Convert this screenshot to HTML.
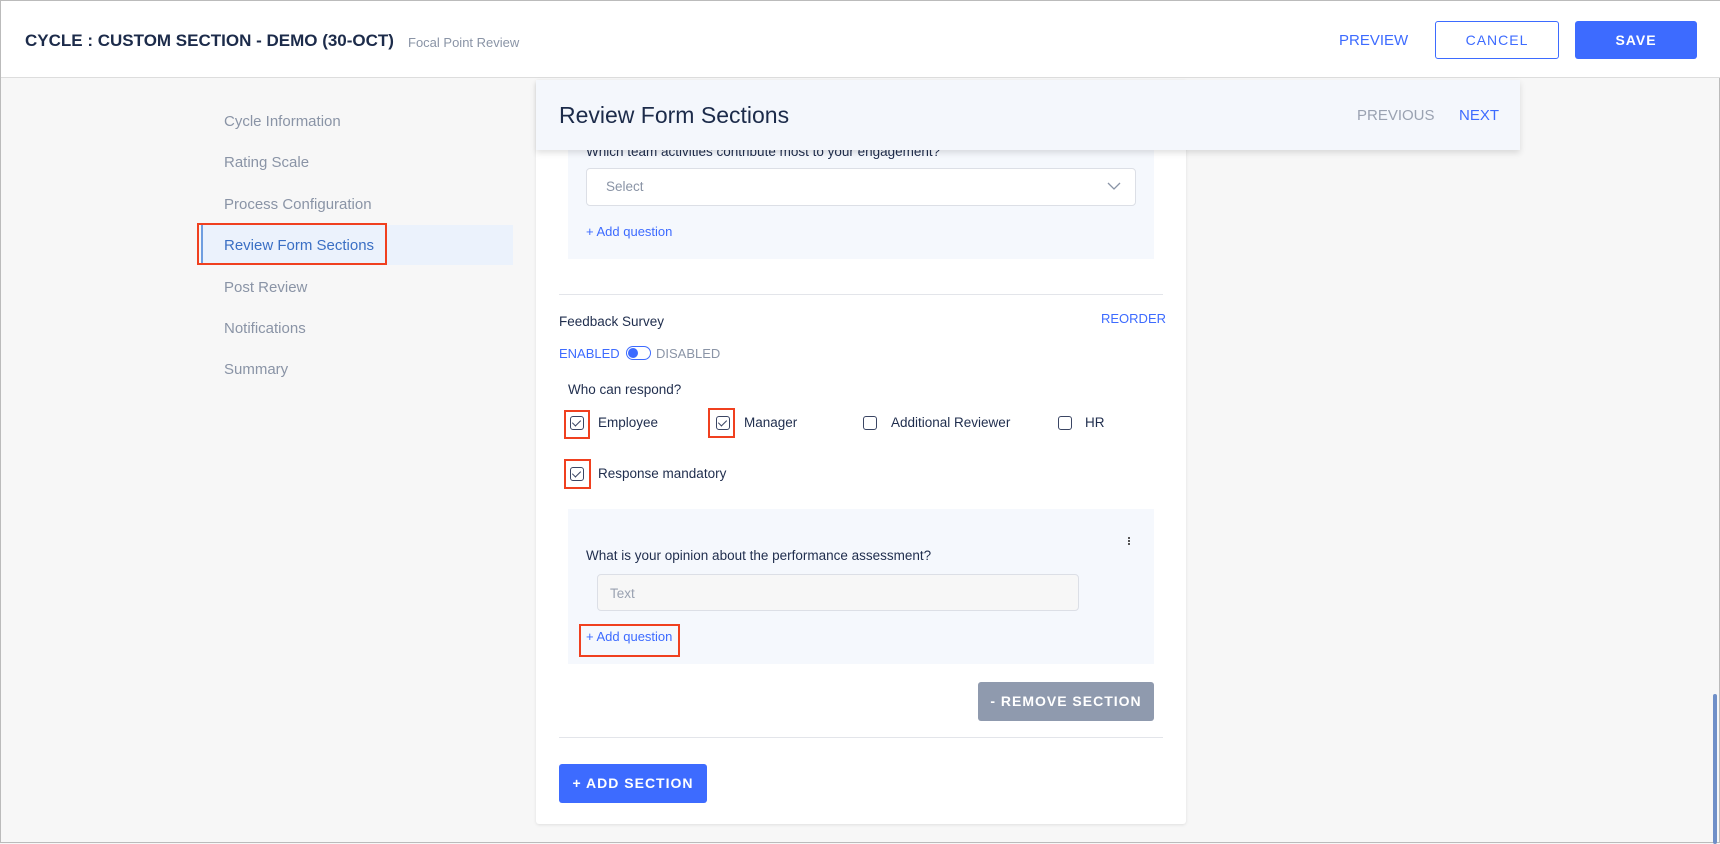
<!DOCTYPE html>
<html><head><style>
*{box-sizing:border-box;margin:0;padding:0}
body{width:1720px;height:843px;overflow:hidden;background:#f7f7f7;font-family:"Liberation Sans",sans-serif;color:#1f2d4d;position:relative;border:1px solid #bbb}
.a{position:absolute;white-space:nowrap}
.red{position:absolute;border:2px solid #f0401f}
.cb{position:absolute;width:14px;height:14px;border:1.5px solid #3a4563;border-radius:3px;background:#fff}
.cb.c::after{content:"";position:absolute;left:3px;top:1px;width:4px;height:7px;border:solid #3a4563;border-width:0 1.3px 1.3px 0;transform:rotate(45deg)}
.f14{font-size:13.5px}
</style></head><body>
<div class="a" style="left:0;top:0;width:1720px;height:77px;background:#fff;border-bottom:1px solid #ddd"></div>
<div class="a" style="left:24px;top:30px;font-size:17px;font-weight:bold;color:#1c2b4a">CYCLE : CUSTOM SECTION - DEMO (30-OCT)</div>
<div class="a" style="left:407px;top:34px;font-size:13px;color:#8a94a6">Focal Point Review</div>
<div class="a" style="left:1338px;top:31px;font-size:15px;color:#3d6bff">PREVIEW</div>
<div class="a" style="left:1434px;top:20px;width:124px;height:38px;border:1px solid #3d6bff;border-radius:3px;color:#3d6bff;font-size:14px;letter-spacing:1px;text-align:center;line-height:36px">CANCEL</div>
<div class="a" style="left:1574px;top:20px;width:122px;height:38px;background:#3d6bff;border-radius:3px;color:#fff;font-size:14px;font-weight:bold;letter-spacing:1px;text-align:center;line-height:38px">SAVE</div>

<div class="a" style="left:200px;top:224px;width:312px;height:40px;background:#ebf2fc;border-left:2px solid #6f9ee0"></div>
<div class="a" style="left:223px;top:100px;font-size:15px;color:#8a94a6;line-height:41.4px">Cycle Information<br>Rating Scale<br>Process Configuration<br><span style="color:#3a6fc4">Review Form Sections</span><br>Post Review<br>Notifications<br>Summary</div>
<div class="red" style="left:196px;top:222px;width:190px;height:42px"></div>

<div class="a" style="left:535px;top:79px;width:650px;height:744px;background:#fff;border-radius:3px;box-shadow:0 1px 3px rgba(0,0,0,.1)"></div>
<div class="a" style="left:567px;top:149px;width:586px;height:109px;background:#f5f8fd"></div>
<div class="a f14" style="left:585px;top:143px;color:#1f2d4d;clip-path:inset(6px 0 0 0)">Which team activities contribute most to your engagement?</div>
<div class="a" style="left:585px;top:167px;width:550px;height:38px;background:#fff;border:1px solid #dcdfe6;border-radius:4px"></div>
<div class="a f14" style="left:605px;top:178px;color:#8a94a6">Select</div>
<svg class="a" style="left:1106px;top:181px" width="14" height="9"><path d="M1 1l6 6 6-6" fill="none" stroke="#8a94a6" stroke-width="1.3"/></svg>
<div class="a" style="left:585px;top:223px;font-size:13px;color:#3d6bff">+ Add question</div>
<div class="a" style="left:535px;top:79px;width:984px;height:70px;background:#f4f7fc;box-shadow:0 3px 6px rgba(0,0,0,.12)"></div>
<div class="a" style="left:558px;top:101px;font-size:23px;color:#1c2b4a">Review Form Sections</div>
<div class="a" style="left:1356px;top:106px;font-size:15px;color:#9aa2b1">PREVIOUS</div>
<div class="a" style="left:1458px;top:106px;font-size:15px;color:#3d6bff">NEXT</div>

<div class="a" style="left:558px;top:293px;width:604px;height:1px;background:#e3e5ea"></div>
<div class="a f14" style="left:558px;top:313px">Feedback Survey</div>
<div class="a" style="left:1100px;top:310px;font-size:13px;color:#3d6bff">REORDER</div>
<div class="a" style="left:558px;top:345px;font-size:13px;color:#3d6bff">ENABLED</div>
<div class="a" style="left:625px;top:345px;width:25px;height:14px;border:1.5px solid #3d6bff;border-radius:8px"></div>
<div class="a" style="left:627px;top:347px;width:10px;height:10px;background:#3d6bff;border-radius:50%"></div>
<div class="a" style="left:655px;top:345px;font-size:13px;color:#8a94a6">DISABLED</div>
<div class="a f14" style="left:567px;top:381px">Who can respond?</div>
<div class="cb c" style="left:569px;top:415px"></div><div class="a f14" style="left:597px;top:414px">Employee</div>
<div class="cb c" style="left:715px;top:415px"></div><div class="a f14" style="left:743px;top:414px">Manager</div>
<div class="cb" style="left:862px;top:415px"></div><div class="a f14" style="left:890px;top:414px">Additional Reviewer</div>
<div class="cb" style="left:1057px;top:415px"></div><div class="a f14" style="left:1084px;top:414px">HR</div>
<div class="cb c" style="left:569px;top:466px"></div><div class="a f14" style="left:597px;top:465px">Response mandatory</div>
<div class="red" style="left:563px;top:409px;width:26px;height:29px"></div>
<div class="red" style="left:707px;top:407px;width:27px;height:30px"></div>
<div class="red" style="left:563px;top:458px;width:27px;height:30px"></div>

<div class="a" style="left:567px;top:508px;width:586px;height:155px;background:#f5f8fd"></div>
<div class="a" style="left:1127px;top:536px;width:2px;height:2px;background:#555;box-shadow:0 3px #555,0 6px #555"></div>
<div class="a f14" style="left:585px;top:547px">What is your opinion about the performance assessment?</div>
<div class="a" style="left:596px;top:573px;width:482px;height:37px;background:#f7f7f7;border:1px solid #dcdfe6;border-radius:4px"></div>
<div class="a f14" style="left:609px;top:585px;color:#9aa2b1">Text</div>
<div class="a" style="left:585px;top:628px;font-size:13px;color:#3d6bff">+ Add question</div>
<div class="red" style="left:578px;top:623px;width:101px;height:33px"></div>

<div class="a" style="left:977px;top:681px;width:176px;height:39px;background:#8f9aae;border-radius:3px;color:#fff;font-size:14px;font-weight:bold;letter-spacing:1px;text-align:center;line-height:39px">- REMOVE SECTION</div>
<div class="a" style="left:558px;top:736px;width:604px;height:1px;background:#e3e5ea"></div>
<div class="a" style="left:558px;top:763px;width:148px;height:39px;background:#3d6bff;border-radius:3px;color:#fff;font-size:14px;font-weight:bold;letter-spacing:1px;text-align:center;line-height:39px">+ ADD SECTION</div>
<div class="a" style="left:1712px;top:693px;width:4px;height:150px;background:#6f8fc8;border-radius:2px"></div>
</body></html>
